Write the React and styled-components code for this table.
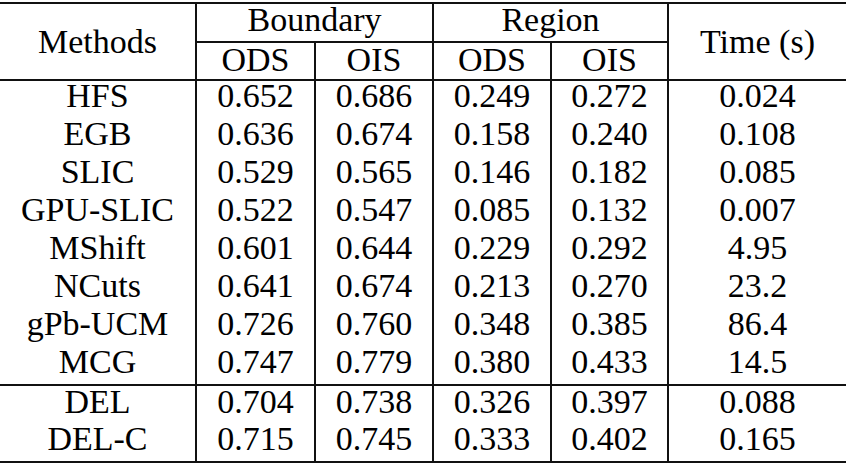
import React from "react";
import styled, { createGlobalStyle } from "styled-components";

const GlobalStyle = createGlobalStyle`
  html, body {
    margin: 0;
    padding: 0;
    background: #ffffff;
  }
  body {
    font-family: "Liberation Serif", serif;
    color: #000000;
  }
`;

const LINE = "2px solid #111111";

const Table = styled.div`
  display: grid;
  width: 846px;
  margin-top: 2px;
  border-top: ${LINE};
  grid-template-columns: 197px 119px 118px 118px 117px 177px;
  grid-template-rows: 39px 38px repeat(7, 38px) 39px 38px 39px;
  font-family: "Liberation Serif", serif;
  font-size: 34px;
  color: #000;
`;

const Cell = styled.div`
  box-sizing: border-box;
  font-family: "Liberation Serif", serif;
  text-align: center;
  white-space: nowrap;
  line-height: ${(p) => p.$lh || 29}px;
  border-right: ${(p) => (p.$right ? LINE : "none")};
  border-bottom: ${(p) => (p.$bottom ? LINE : "none")};
  grid-row: ${(p) => (p.$rows ? `span ${p.$rows}` : "auto")};
  grid-column: ${(p) => (p.$cols ? `span ${p.$cols}` : "auto")};
`;

const GroupHead = styled(Cell).attrs({ $cols: 2, $lh: 32, $right: true, $bottom: true })``;
const TallHead = styled(Cell).attrs({ $rows: 2, $lh: 75, $bottom: true })``;
const SubHead = styled(Cell).attrs({ $lh: 34, $bottom: true, $right: true })``;

const groups = [
  [
    ["HFS", "0.652", "0.686", "0.249", "0.272", "0.024"],
    ["EGB", "0.636", "0.674", "0.158", "0.240", "0.108"],
    ["SLIC", "0.529", "0.565", "0.146", "0.182", "0.085"],
    ["GPU-SLIC", "0.522", "0.547", "0.085", "0.132", "0.007"],
    ["MShift", "0.601", "0.644", "0.229", "0.292", "4.95"],
    ["NCuts", "0.641", "0.674", "0.213", "0.270", "23.2"],
    ["gPb-UCM", "0.726", "0.760", "0.348", "0.385", "86.4"],
    ["MCG", "0.747", "0.779", "0.380", "0.433", "14.5"],
  ],
  [
    ["DEL", "0.704", "0.738", "0.326", "0.397", "0.088"],
    ["DEL-C", "0.715", "0.745", "0.333", "0.402", "0.165"],
  ],
];

export default function App() {
  return (
    <>
      <GlobalStyle />
      <Table role="table">
        <TallHead $right>Methods</TallHead>
        <GroupHead>Boundary</GroupHead>
        <GroupHead>Region</GroupHead>
        <TallHead>Time (s)</TallHead>
        <SubHead>ODS</SubHead>
        <SubHead>OIS</SubHead>
        <SubHead>ODS</SubHead>
        <SubHead>OIS</SubHead>
        {groups.map((rows, gi) =>
          rows.map((row, ri) =>
            row.map((val, ci) => (
              <Cell
                key={`${gi}-${ri}-${ci}`}
                $right={ci < row.length - 1}
                $bottom={ri === rows.length - 1}
                $lh={gi === 1 && ri === 0 ? 31 : 29}
              >
                {val}
              </Cell>
            ))
          )
        )}
      </Table>
    </>
  );
}
